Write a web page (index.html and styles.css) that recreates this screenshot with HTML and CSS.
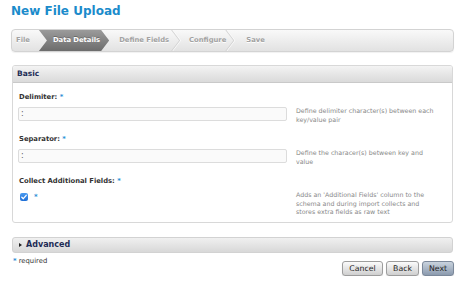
FILE: index.html
```html
<!DOCTYPE html>
<html>
<head>
<meta charset="utf-8">
<link rel="stylesheet" href="styles.css">
</head>
<body>
<div class="page">
  <h1 class="title">New File Upload</h1>
  <ol class="steps">
    <li class="step step-first">File</li>
    <li class="step step-active">Data Details</li>
    <li class="step step-sep step-define">Define Fields</li>
    <li class="step step-sep step-config">Configure</li>
    <li class="step step-save">Save</li>
  </ol>

  <section class="panel">
    <div class="panel-head">Basic</div>
    <div class="panel-body">
      <div class="field">
        <div class="label">Delimiter: <span class="star">*</span></div>
        <div class="row">
          <div class="input">:</div>
          <div class="desc">Define delimiter character(s) between each key/value pair</div>
        </div>
      </div>
      <div class="field">
        <div class="label">Separator: <span class="star">*</span></div>
        <div class="row">
          <div class="input">:</div>
          <div class="desc">Define the characer(s) between key and value</div>
        </div>
      </div>
      <div class="field field-last">
        <div class="label">Collect Additional Fields: <span class="star">*</span></div>
        <div class="row row-check">
          <div class="check-wrap">
            <span class="checkbox"><svg viewBox="0 0 8 8" width="8" height="8"><path d="M1.8 4.2 L3.3 5.7 L6.2 2.3" fill="none" stroke="#fff" stroke-width="1.3" stroke-linecap="round" stroke-linejoin="round"/></svg></span>
            <span class="star">*</span>
          </div>
          <div class="desc">Adds an 'Additional Fields' column to the schema and during import collects and stores extra fields as raw text</div>
        </div>
      </div>
    </div>
  </section>

  <div class="advanced"><span class="tri"></span>Advanced</div>

  <div class="footer">
    <div class="required"><span class="star">*</span> required</div>
    <div class="buttons">
      <button class="btn">Cancel</button>
      <button class="btn">Back</button>
      <button class="btn btn-next">Next</button>
    </div>
  </div>
</div>
</body>
</html>
```
FILE: styles.css
```css
html, body {
  margin: 0;
  padding: 0;
  background: #fff;
}
body {
  font-family: "DejaVu Sans", Verdana, sans-serif;
  color: #333;
}
.page {
  padding: 3px 20px 0 11px;
}
.title {
  margin: 0;
  font-size: 12px;
  line-height: 16px;
  font-weight: bold;
  color: #1b8bcb;
}

/* breadcrumb steps */
.steps {
  list-style: none;
  margin: 10px 0 0 0;
  padding: 0;
  height: 21px;
  display: flex;
  border: 1px solid #d3d3d3;
  border-radius: 4px;
  background: linear-gradient(#f9f9f9, #e2e2e2);
  box-shadow: 0 1px 1px rgba(0,0,0,0.06);
}
.step {
  position: relative;
  font-size: 6.8px;
  font-weight: bold;
  line-height: 21px;
  color: #a2a2a2;
  text-shadow: 0 1px 0 #fff;
  white-space: nowrap;
}
.step-first { padding: 0 9px 0 4px; }
.step-active {
  padding: 0 9px 0 14px;
  color: #fff;
  text-shadow: 0 -1px 0 rgba(0,0,0,0.25);
  background: linear-gradient(#9b9b9b, #6c6c6c);
  clip-path: polygon(0 0, calc(100% - 8px) 0, 100% 50%, calc(100% - 8px) 100%, 0 100%, 8px 50%);
}
.step-define { padding: 0 12px 0 10px; }
.step-config { padding: 0 9px 0 8px; }
.step-save { padding: 0 0 0 11px; }
.step-sep::after,
.step-sep::before {
  content: "";
  position: absolute;
  top: 0;
  width: 10px;
  height: 100%;
  clip-path: polygon(0 0, 1px 0, 9px 50%, 1px 100%, 0 100%, 8px 50%);
}
.step-sep::after {
  right: 0;
  background: #d2d2d2;
}
.step-sep::before {
  right: -1px;
  background: #fbfbfb;
}

/* panel */
.panel {
  margin: 13px 1px 0 1px;
  border: 1px solid #d8d8d8;
  border-radius: 3px;
  overflow: hidden;
}
.panel-head {
  height: 16px;
  line-height: 16px;
  padding-left: 4px;
  font-size: 7.5px;
  font-weight: bold;
  color: #1d2c55;
  background: linear-gradient(#f3f3f3, #dadada);
  border-bottom: 1px solid #c9c9c9;
}
.panel-body {
  padding: 9px 14px 5px 5px;
}
.field {
  margin-bottom: 5px;
}
.field-last {
  margin-bottom: 0;
}
.label {
  font-size: 6.8px;
  font-weight: bold;
  line-height: 10px;
  color: #333;
  margin-bottom: 5px;
  padding-left: 1px;
}
.star {
  color: #2d8fd5;
  font-weight: bold;
}
.row {
  display: grid;
  grid-template-columns: 269px 1fr;
  column-gap: 9px;
  height: 22px;
  align-items: start;
}
.row-check {
  height: auto;
}
.input {
  box-sizing: border-box;
  height: 14px;
  border: 1px solid #dcdcdc;
  border-radius: 2px;
  background: #fafafa;
  font-size: 8px;
  line-height: 12px;
  padding-left: 2px;
  color: #555;
}
.desc {
  font-size: 6.3px;
  line-height: 8.7px;
  color: #888;
}
.check-wrap {
  display: flex;
  align-items: center;
  gap: 6px;
  padding: 2px 0 0 2px;
  font-size: 7px;
  line-height: 8px;
}
.checkbox {
  display: block;
  width: 8px;
  height: 8px;
  border-radius: 2px;
  background: linear-gradient(#4a9bf0, #1f6fd6);
}
.checkbox svg { display: block; }

/* advanced bar */
.advanced {
  margin: 14px 1px 0 1px;
  box-sizing: border-box;
  height: 16px;
  line-height: 14px;
  border: 1px solid #d2d2d2;
  border-radius: 3px;
  background: linear-gradient(#f0f0f0, #d8d8d8);
  font-size: 8px;
  font-weight: bold;
  color: #1d2c55;
  padding-left: 6px;
  display: flex;
  align-items: center;
}
.tri {
  width: 0;
  height: 0;
  border-left: 3px solid #222;
  border-top: 2.5px solid transparent;
  border-bottom: 2.5px solid transparent;
  margin-right: 4px;
}

/* footer */
.footer {
  margin-top: 3px;
  display: flex;
  justify-content: space-between;
  align-items: flex-start;
}
.required {
  font-size: 6.8px;
  line-height: 10px;
  color: #333;
  padding-left: 2px;
}
.buttons {
  display: flex;
  gap: 3px;
  margin-top: 5px;
}
.btn {
  box-sizing: border-box;
  height: 15px;
  padding: 0;
  font-family: "DejaVu Sans", Verdana, sans-serif;
  font-size: 7.8px;
  line-height: 13px;
  color: #222;
  border: 1px solid #9d9d9d;
  border-radius: 3px;
  background: linear-gradient(#fbfbfb, #cfcfcf);
  box-shadow: 0 1px 1px rgba(0,0,0,0.12);
  width: 41px;
}
.btn:nth-child(2) { width: 33px; }
.btn-next {
  width: 32px;
  border-color: #7b889a;
  background: linear-gradient(#c9d3de, #8b9aae);
}
```
